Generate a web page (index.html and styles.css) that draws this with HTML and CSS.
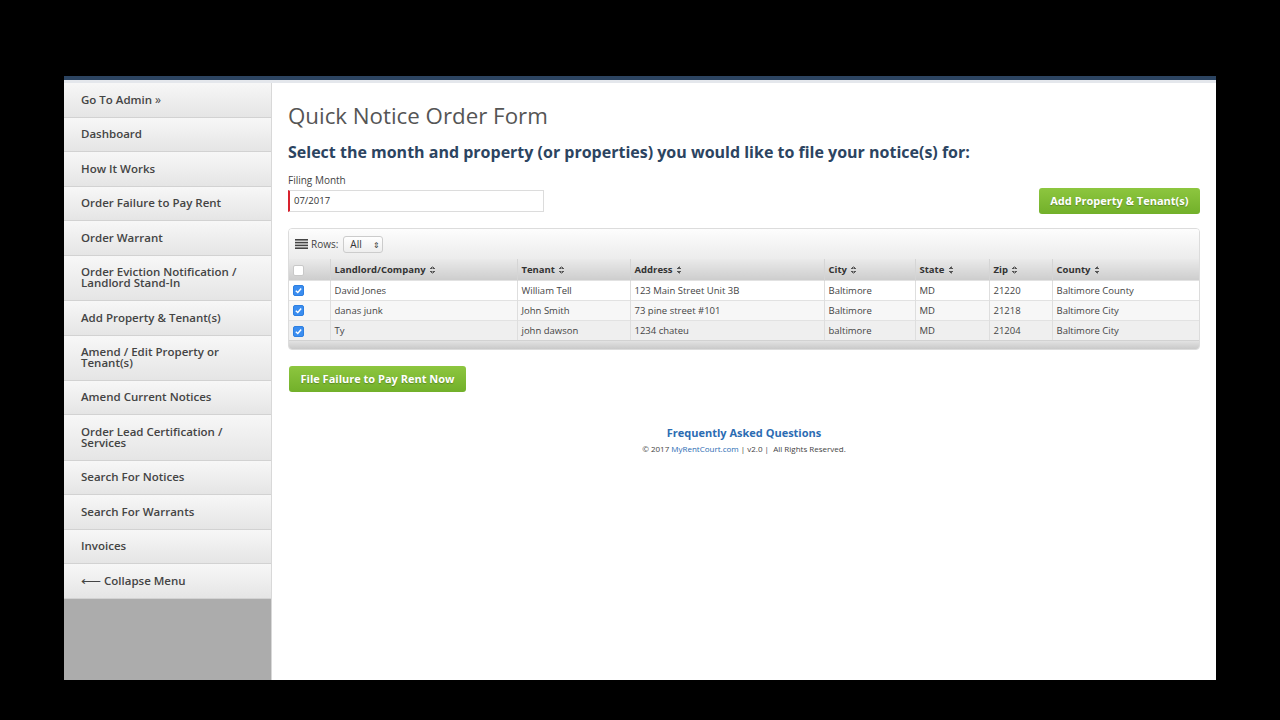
FILE: index.html
```html
<!DOCTYPE html>
<html lang="en">
<head>
    <meta charset="UTF-8">
    <title>Quick Notice Order Form</title>
    <link rel="stylesheet" href="styles.css">
</head>
<body>

<div class="frame">
    <div class="topbar"></div>
    <div class="app">

        <!-- Sidebar -->
        <nav class="sidebar">
            <a href="#" class="menu-item">Go To Admin <span class="raquo">&raquo;</span></a>
            <a href="#" class="menu-item">Dashboard</a>
            <a href="#" class="menu-item">How It Works</a>
            <a href="#" class="menu-item">Order Failure to Pay Rent</a>
            <a href="#" class="menu-item">Order Warrant</a>
            <a href="#" class="menu-item">Order Eviction Notification / Landlord Stand-In</a>
            <a href="#" class="menu-item">Add Property &amp; Tenant(s)</a>
            <a href="#" class="menu-item">Amend / Edit Property or Tenant(s)</a>
            <a href="#" class="menu-item">Amend Current Notices</a>
            <a href="#" class="menu-item">Order Lead Certification / Services</a>
            <a href="#" class="menu-item">Search For Notices</a>
            <a href="#" class="menu-item">Search For Warrants</a>
            <a href="#" class="menu-item">Invoices</a>
            <a href="#" class="menu-item"><span class="arrow">&#10229;</span> Collapse Menu</a>
        </nav>

        <!-- Content -->
        <main class="content">
            <h1 class="page-title">Quick Notice Order Form</h1>
            <h2 class="lead">Select the month and property (or properties) you would like to file your notice(s) for:</h2>

            <div class="form-row">
                <div class="field">
                    <label class="field-label">Filing Month</label>
                    <div class="input">07/2017</div>
                </div>
                <a href="#" class="btn">Add Property &amp; Tenant(s)</a>
            </div>

            <div class="grid">
                <div class="toolbar">
                    <svg class="menu-icon" width="13" height="10" viewBox="0 0 13 10">
                        <rect x="0" y="0" width="13" height="1.6" fill="#444"/>
                        <rect x="0" y="2.8" width="13" height="1.6" fill="#444"/>
                        <rect x="0" y="5.6" width="13" height="1.6" fill="#444"/>
                        <rect x="0" y="8.4" width="13" height="1.6" fill="#444"/>
                    </svg>
                    <span class="rows-label">Rows:</span>
                    <span class="select">All <span class="updown">&#8661;</span></span>
                </div>
                <table>
                    <thead>
                        <tr>
                            <th class="col-check"><span class="box"></span></th>
                            <th class="col-landlord">Landlord/Company <span class="sort"></span></th>
                            <th class="col-tenant">Tenant <span class="sort"></span></th>
                            <th class="col-address">Address <span class="sort"></span></th>
                            <th class="col-city">City <span class="sort"></span></th>
                            <th class="col-state">State <span class="sort"></span></th>
                            <th class="col-zip">Zip <span class="sort"></span></th>
                            <th class="col-county">County <span class="sort"></span></th>
                        </tr>
                    </thead>
                    <tbody>
                        <tr>
                            <td class="col-check"><span class="box checked"></span></td>
                            <td>David Jones</td>
                            <td>William Tell</td>
                            <td>123 Main Street Unit 3B</td>
                            <td>Baltimore</td>
                            <td>MD</td>
                            <td>21220</td>
                            <td>Baltimore County</td>
                        </tr>
                        <tr>
                            <td class="col-check"><span class="box checked"></span></td>
                            <td>danas junk</td>
                            <td>John Smith</td>
                            <td>73 pine street #101</td>
                            <td>Baltimore</td>
                            <td>MD</td>
                            <td>21218</td>
                            <td>Baltimore City</td>
                        </tr>
                        <tr>
                            <td class="col-check"><span class="box checked"></span></td>
                            <td>Ty</td>
                            <td>john dawson</td>
                            <td>1234 chateu</td>
                            <td>baltimore</td>
                            <td>MD</td>
                            <td>21204</td>
                            <td>Baltimore City</td>
                        </tr>
                    </tbody>
                </table>
                <div class="grid-foot"></div>
            </div>

            <a href="#" class="btn btn-file">File Failure to Pay Rent Now</a>

            <footer>
                <a href="#" class="faq">Frequently Asked Questions</a>
                <p class="copy">&copy; 2017 <a href="#">MyRentCourt.com</a> | v2.0 | &nbsp;All Rights Reserved.</p>
            </footer>
        </main>
    </div>
</div>

</body>
</html>
```

FILE: styles.css
```css
body {
    margin: 0;
    background: #000;
    font-family: "Open Sans", "Liberation Sans", sans-serif;
    color: #444;
}

a { text-decoration: none; }

/* Frame */
.frame {
    margin: 76px 0 0 64px;
    width: 1152px;
    height: 604px;
    background: #fff;
    display: flex;
    flex-direction: column;
}
.topbar {
    height: 4px;
    background: #2c4461;
    border-bottom: 3px solid #e4e7ec;
}
.app {
    flex: 1;
    display: flex;
    min-height: 0;
}

/* Sidebar */
.sidebar {
    width: 207px;
    background: #acacac;
    border-right: 1px solid #d8d8d8;
    display: flex;
    flex-direction: column;
}
.menu-item {
    display: block;
    padding: 11.6px 17px 11.4px 17px;
    font-size: 11.5px;
    line-height: 10.6px;
    font-weight: 600;
    color: #444;
    background: linear-gradient(#f7f7f7, #e5e5e5);
    border-bottom: 1px solid #d2d2d2;
}
.menu-item .raquo {
    font-weight: 400;
    font-size: 12px;
    line-height: 10px;
}
.menu-item .arrow {
    font-weight: 400;
    font-size: 14px;
    line-height: 10px;
    vertical-align: top;
}

/* Content */
.content {
    flex: 1;
    padding: 0 16px;
    display: flex;
    flex-direction: column;
}
.page-title {
    margin: 18px 0 0;
    font-size: 22.3px;
    font-weight: 400;
    color: #555;
    line-height: 30px;
}
.lead {
    margin: 10px 0 0;
    font-size: 16px;
    font-weight: 700;
    color: #2c4461;
    line-height: 22px;
}

.form-row {
    margin-top: 10px;
    display: flex;
    justify-content: space-between;
    align-items: flex-end;
}
.field-label {
    display: block;
    font-size: 10px;
    line-height: 14px;
    margin-bottom: 3px;
}
.input {
    width: 256px;
    height: 22px;
    box-sizing: border-box;
    border: 1px solid #dcdcdc;
    border-left: 2px solid #d8222e;
    padding-left: 4px;
    font-size: 9.5px;
    line-height: 20px;
    color: #333;
}

.btn {
    display: inline-block;
    background: linear-gradient(#8dc63f, #72b02a);
    color: #fff;
    font-size: 11px;
    font-weight: 700;
    line-height: 26px;
    padding: 0 11.5px;
    border-radius: 3px;
    text-shadow: 0 1px 1px rgba(0, 0, 0, 0.25);
    margin-bottom: -2px;
}

/* Grid */
.grid {
    margin-top: 16px;
    border: 1px solid #dcdcdc;
    border-radius: 4px;
    overflow: hidden;
}
.toolbar {
    height: 30px;
    background: linear-gradient(#fdfdfd, #ececec);
    display: flex;
    align-items: center;
    padding-left: 6px;
    font-size: 10px;
}
.menu-icon { margin-right: 3px; }
.rows-label { margin-right: 5px; }
.select {
    display: inline-block;
    width: 40px;
    height: 17px;
    box-sizing: border-box;
    border: 1px solid #ccc;
    border-radius: 3px;
    background: linear-gradient(#fff, #eee);
    padding-left: 6px;
    line-height: 15px;
    color: #333;
}
.updown {
    font-size: 8px;
    margin-left: 9px;
}

table {
    width: 100%;
    border-collapse: collapse;
    font-size: 9.5px;
}
th, td {
    height: 20px;
    padding: 0 4px;
    text-align: left;
    border-left: 1px solid #dedede;
    box-sizing: border-box;
}
th:first-child, td:first-child { border-left: none; }
th {
    height: 21px;
    background: linear-gradient(#eaeaea, #cdcdcd);
    color: #333;
    font-weight: 700;
    border-left-color: #d5d5d5;
}
td {
    color: #444;
    border-top: 1px solid #e2e2e2;
}
tbody tr:nth-child(1) td { background: #fff; }
tbody tr:nth-child(2) td { background: #f7f7f7; }
tbody tr:nth-child(3) td { background: #efefef; }

.col-check { width: 41px; padding-left: 4px; }
.col-landlord { width: 187px; }
.col-tenant { width: 113px; }
.col-address { width: 194px; }
.col-city { width: 91px; }
.col-state { width: 74px; }
.col-zip { width: 63px; }

.sort {
    display: inline-block;
    width: 5px;
    height: 8px;
    margin-left: 2px;
    vertical-align: -1px;
    background:
        linear-gradient(to bottom right, transparent 50%, #555 50%) 0 0 / 2.5px 3px no-repeat,
        linear-gradient(to bottom left, transparent 50%, #555 50%) 2.5px 0 / 2.5px 3px no-repeat,
        linear-gradient(to top right, transparent 50%, #555 50%) 0 5px / 2.5px 3px no-repeat,
        linear-gradient(to top left, transparent 50%, #555 50%) 2.5px 5px / 2.5px 3px no-repeat;
}

.box {
    display: inline-block;
    width: 9px;
    height: 9px;
    border: 1px solid #c8c8c8;
    border-radius: 2px;
    background: #fff;
    vertical-align: middle;
}
.box.checked {
    border-color: #2d7fe0;
    background: #3a8df0 url("data:image/svg+xml,%3Csvg xmlns='http://www.w3.org/2000/svg' viewBox='0 0 10 10'%3E%3Cpath d='M2 5.2 L4.2 7.3 L8 2.8' fill='none' stroke='white' stroke-width='1.6'/%3E%3C/svg%3E") center / 9px 9px no-repeat;
}

.grid-foot {
    height: 8px;
    background: linear-gradient(#e2e2e2, #c9c9c9);
    border-top: 1px solid #d2d2d2;
}

.btn-file {
    align-self: flex-start;
    margin: 16px 0 0 1px;
}

/* Footer */
footer {
    text-align: center;
    margin-top: 28px;
}
.faq {
    font-size: 11px;
    font-weight: 700;
    color: #2b6cb3;
    line-height: 16px;
}
.copy {
    margin: 1px 0 0;
    font-size: 8px;
    color: #444;
}
.copy a { color: #2b6cb3; }
```
